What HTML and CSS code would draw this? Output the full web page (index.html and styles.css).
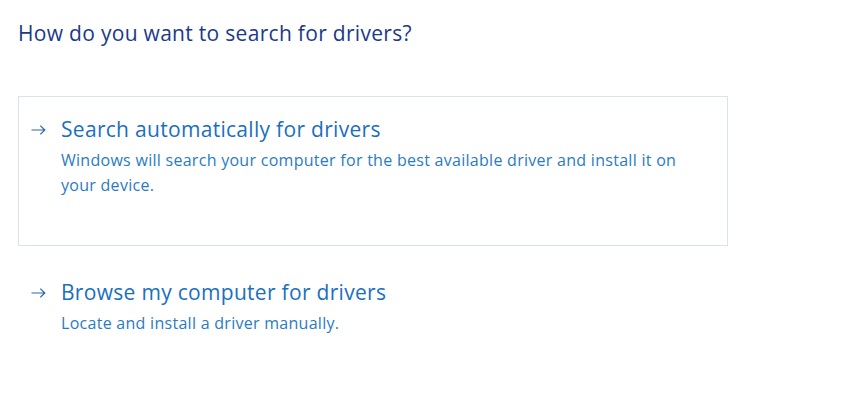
FILE: index.html
```html
<!DOCTYPE html>
<html>
<head>
<meta charset="utf-8">
<link rel="stylesheet" href="styles.css">
</head>
<body>
<div class="page">
  <h1 class="heading">How do you want to search for drivers?</h1>
  <div class="option option-boxed">
    <svg class="arrow" width="15" height="10" viewBox="0 0 15 10"><path d="M0.5 5H13.8M9.3 0.6L13.8 5L9.3 9.4" fill="none" stroke="#2f64a8" stroke-width="1.2"/></svg>
    <div class="option-text">
      <div class="option-title">Search automatically for drivers</div>
      <div class="option-desc">Windows will search your computer for the best available driver and install it on your device.</div>
    </div>
  </div>
  <div class="option option-plain">
    <svg class="arrow" width="15" height="10" viewBox="0 0 15 10"><path d="M0.5 5H13.8M9.3 0.6L13.8 5L9.3 9.4" fill="none" stroke="#2f64a8" stroke-width="1.2"/></svg>
    <div class="option-text">
      <div class="option-title">Browse my computer for drivers</div>
      <div class="option-desc">Locate and install a driver manually.</div>
    </div>
  </div>
</div>
</body>
</html>
```
FILE: styles.css
```css
html, body {
  margin: 0;
  padding: 0;
  background: #ffffff;
}
body {
  font-family: "Open Sans", "Noto Sans", sans-serif;
}
.page {
  padding: 17px 0 0 18px;
  width: 710px;
}
.heading {
  margin: 0 0 47px 0;
  font-size: 21px;
  font-weight: 400;
  color: #1c3a87;
  line-height: 32px;
  letter-spacing: 0.3px;
}
.option {
  display: flex;
  align-items: flex-start;
}
.option-boxed {
  border: 1px solid #d7e3ef;
  box-sizing: border-box;
  height: 150px;
  padding: 17px 0 0 12px;
  margin-bottom: 32px;
}
.option-plain {
  padding: 0 0 0 13px;
  margin-top: -1px;
}
.arrow {
  flex: none;
  margin: 11px 15px 0 0;
}
.option-text {
  flex: 1;
}
.option-title {
  font-size: 21px;
  color: #1a6fc0;
  line-height: 30px;
  letter-spacing: 0.3px;
}
.option-desc {
  margin-top: 4px;
  font-size: 16px;
  color: #2a7bc4;
  line-height: 25px;
  padding-right: 40px;
  letter-spacing: 0.28px;
}
```
